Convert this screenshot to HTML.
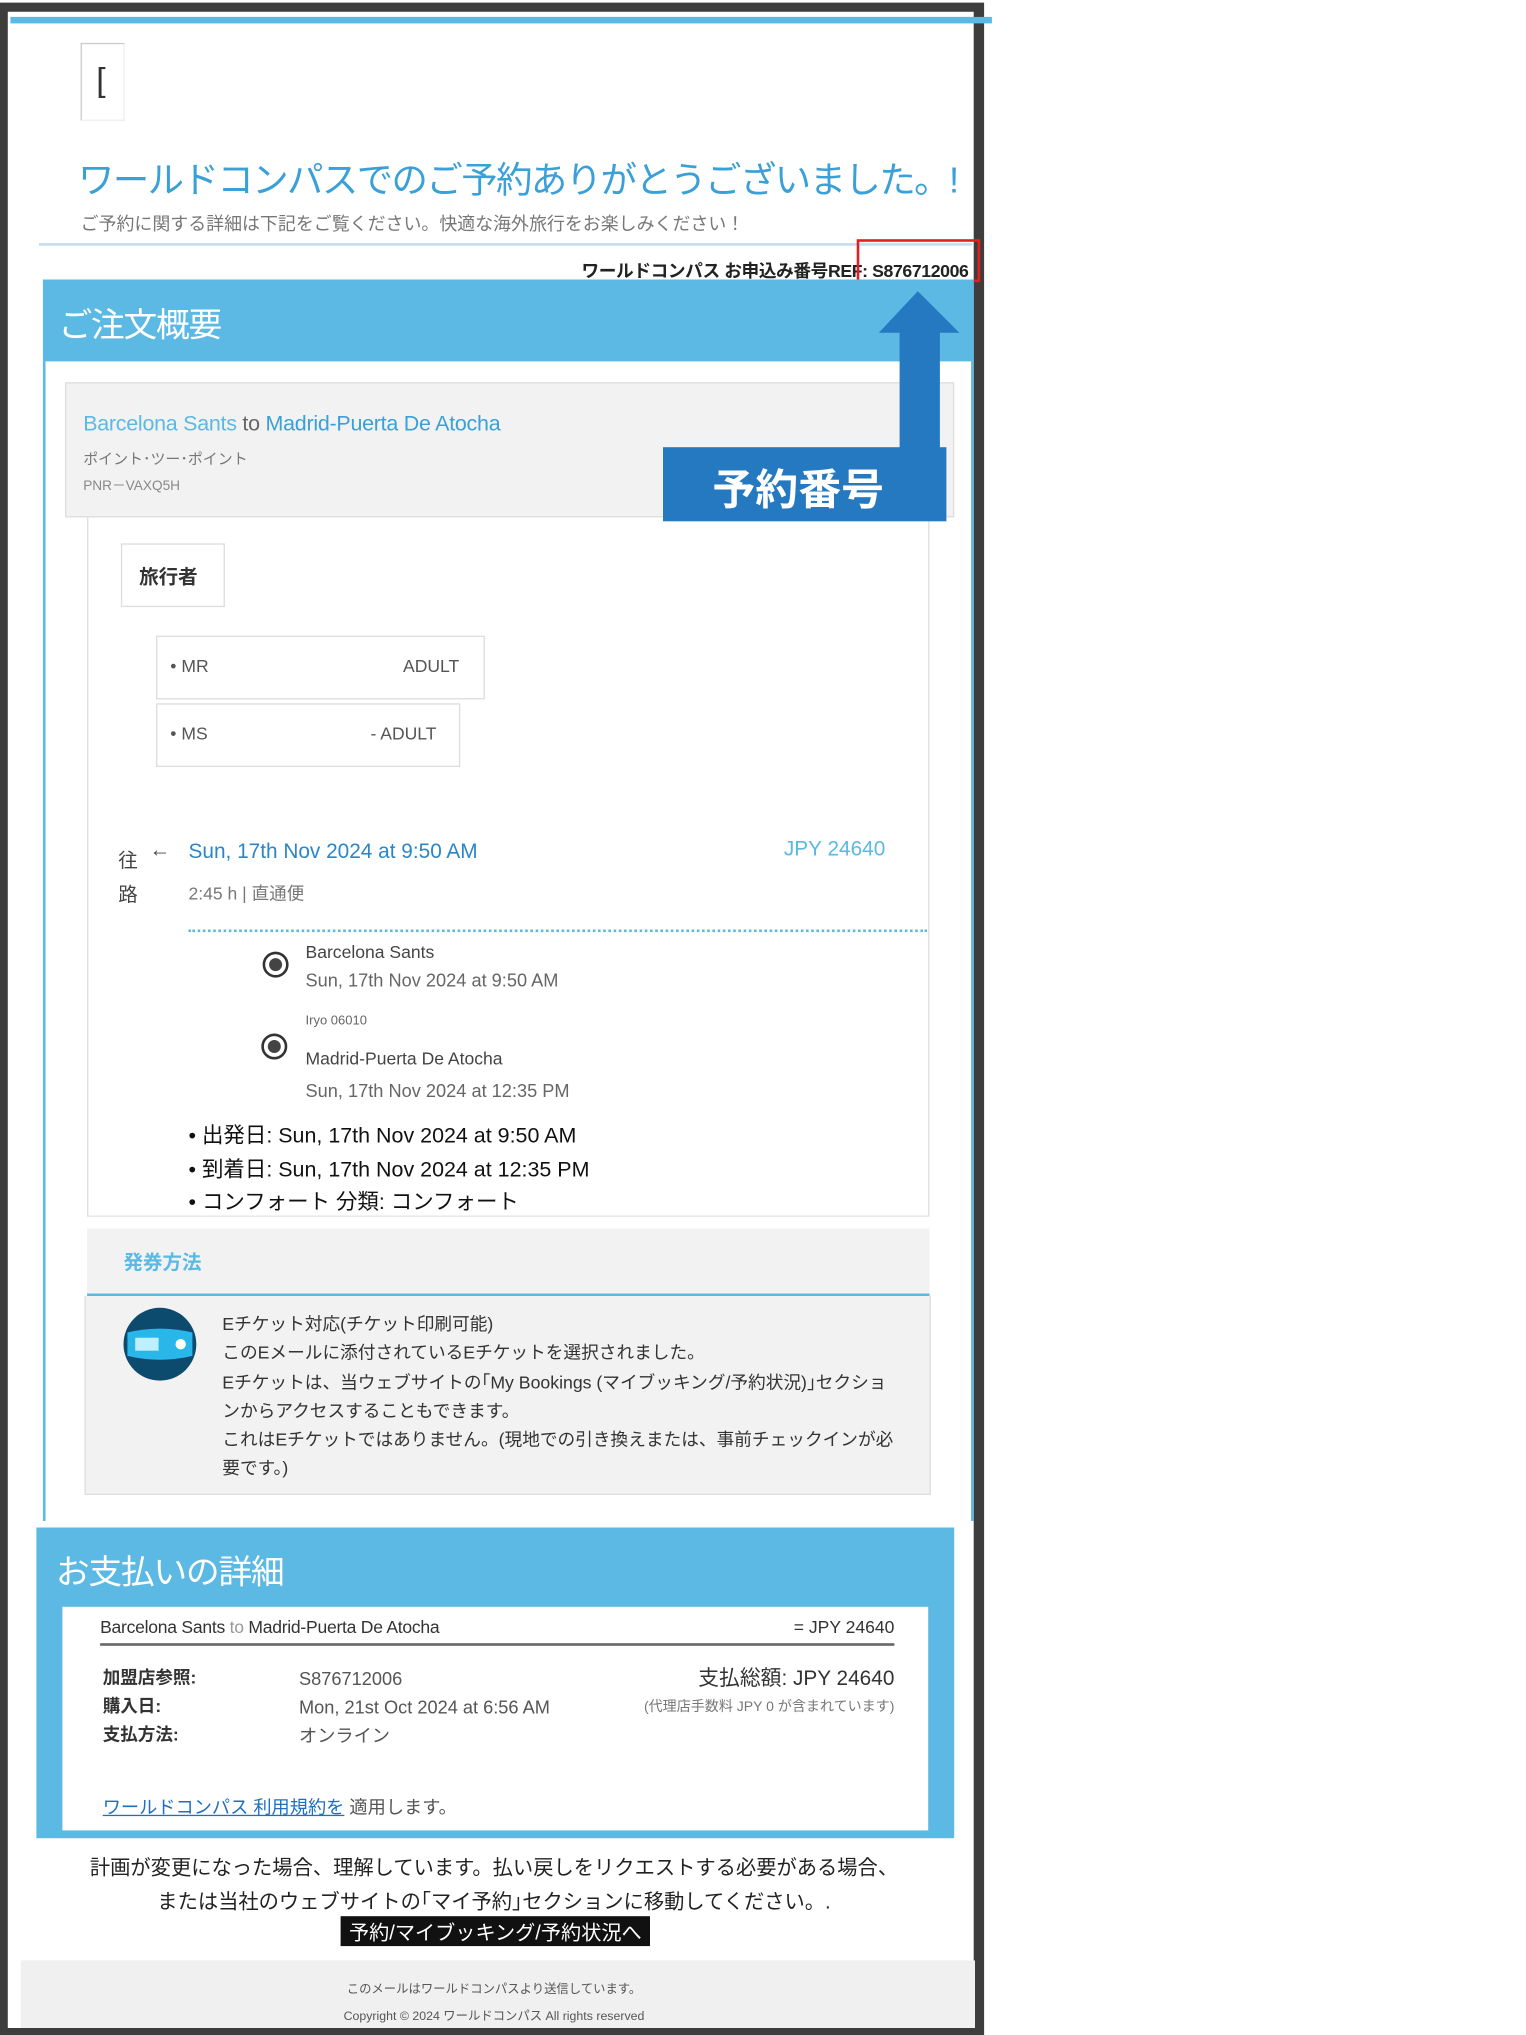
<!DOCTYPE html>
<html><head><meta charset="utf-8"><style>
html,body{margin:0;padding:0;background:#fff;overflow:hidden}
body{width:1526px;height:2035px;position:relative}
#c{position:absolute;left:0;top:0;width:1174px;height:1566px;transform:scale(1.3,1.3);transform-origin:0 0;font-family:"Liberation Sans","Noto Sans CJK JP",sans-serif;color:#222}
.a{position:absolute;white-space:nowrap}
.bx{position:absolute;box-sizing:border-box}
</style></head><body><div id="c">
<!-- frame -->
<div class="bx" style="left:0;top:2px;width:757px;height:1564px;border:6px solid #3d3d3d;border-right-width:8px;border-top-width:7px"></div>
<div class="bx" style="left:8px;top:13px;width:755px;height:5px;background:#5bb9e3"></div>
<!-- logo -->
<div class="bx" style="left:62px;top:33px;width:34px;height:60px;border:1px solid #ccc;border-right-color:#eee;border-bottom-color:#eee"></div>
<div class="a" style="left:74px;top:46px;font-size:26px;color:#333">[</div>
<div class="a" style="left:60px;top:117px;font-size:28px;color:#3aa0d8;letter-spacing:-1.2px">ワールドコンパスでのご予約ありがとうございました。!</div>
<div class="a" style="left:62px;top:161px;font-size:13.8px;color:#777">ご予約に関する詳細は下記をご覧ください。快適な海外旅行をお楽しみください！</div>
<div class="bx" style="left:30px;top:187px;width:718px;height:2px;background:#c5dcf2"></div>
<div class="a" style="left:403px;top:197px;width:342px;text-align:right;font-size:13.6px;font-weight:bold;color:#222;letter-spacing:-0.3px">ワールドコンパス お申込み番号REF: S876712006</div>
<div class="bx" style="left:659px;top:184px;width:95px;height:33px;border:2px solid #e41e1e"></div>
<!-- order summary -->
<div class="bx" style="left:33px;top:215px;width:716px;height:63px;background:#5bb9e3"></div>
<div class="a" style="left:45px;top:230px;font-size:26px;color:#fff;letter-spacing:-1px">ご注文概要</div>
<div class="bx" style="left:33px;top:278px;width:716px;height:892px;border-left:2px solid #5bb9e3;border-right:2px solid #5bb9e3"></div>
<div class="bx" style="left:50px;top:294px;width:684px;height:104px;background:#f2f2f2;border:1px solid #ddd"></div>
<div class="a" style="left:64px;top:317px;font-size:16.5px;color:#5bb9e3;letter-spacing:-0.2px">Barcelona Sants <span style="color:#666">to</span> <span style="color:#3aa0d8">Madrid-Puerta De Atocha</span></div>
<div class="a" style="left:64px;top:345px;font-size:11.5px;color:#777">ポイント･ツー･ポイント</div>
<div class="a" style="left:64px;top:366px;font-size:10.5px;color:#888">PNR－VAXQ5H</div>
<div class="bx" style="left:67px;top:398px;width:648px;height:538px;border-left:1px solid #ddd;border-right:1px solid #ddd;border-bottom:1px solid #e5e5e5"></div>
<div class="bx" style="left:93px;top:418px;width:80px;height:49px;border:1px solid #ddd"></div>
<div class="a" style="left:107px;top:433px;font-size:15px;font-weight:bold;color:#333">旅行者</div>
<div class="bx" style="left:120px;top:489px;width:253px;height:49px;border:1px solid #ddd"></div>
<div class="a" style="left:131px;top:505px;font-size:13.5px;color:#555">• MR</div>
<div class="a" style="left:310px;top:505px;font-size:13.5px;color:#555">ADULT</div>
<div class="bx" style="left:120px;top:541px;width:234px;height:49px;border:1px solid #ddd"></div>
<div class="a" style="left:131px;top:557px;font-size:13.5px;color:#555">• MS</div>
<div class="a" style="left:285px;top:557px;font-size:13.5px;color:#555">- ADULT</div>
<div class="a" style="left:91px;top:650px;font-size:15px;color:#444;line-height:26px;white-space:normal;width:18px">往路</div>
<div class="a" style="left:115px;top:646px;font-size:16px;color:#444">←</div>
<div class="a" style="left:145px;top:647px;font-size:16px;color:#2a86c8">Sun, 17th Nov 2024 at 9:50 AM</div>
<div class="a" style="left:603px;top:645px;font-size:16px;color:#5bb9e3">JPY 24640</div>
<div class="a" style="left:145px;top:676px;font-size:13.5px;color:#777">2:45 h | 直通便</div>
<div class="bx" style="left:145px;top:715px;width:568px;height:0;border-top:2px dotted #5bb9e3"></div>
<svg class="a" style="left:200px;top:730px" width="24" height="88" viewBox="0 0 24 88"><circle cx="12" cy="12" r="9" fill="none" stroke="#333" stroke-width="2"/><circle cx="12" cy="12" r="5" fill="#444"/><circle cx="11" cy="75" r="9" fill="none" stroke="#333" stroke-width="2"/><circle cx="11" cy="75" r="5" fill="#444"/></svg>
<div class="a" style="left:235px;top:725px;font-size:13.5px;color:#444">Barcelona Sants</div>
<div class="a" style="left:235px;top:746px;font-size:14px;color:#666">Sun, 17th Nov 2024 at 9:50 AM</div>
<div class="a" style="left:235px;top:780px;font-size:10px;color:#666">Iryo 06010</div>
<div class="a" style="left:235px;top:807px;font-size:13.5px;color:#444">Madrid-Puerta De Atocha</div>
<div class="a" style="left:235px;top:831px;font-size:14px;color:#666">Sun, 17th Nov 2024 at 12:35 PM</div>
<div class="a" style="left:145px;top:862px;font-size:16.5px;color:#111;line-height:25.5px">• 出発日: Sun, 17th Nov 2024 at 9:50 AM<br>• 到着日: Sun, 17th Nov 2024 at 12:35 PM<br>• コンフォート 分類: コンフォート</div>
<!-- ticketing -->
<div class="bx" style="left:67px;top:945px;width:648px;height:52px;background:#f2f2f2;border-bottom:2px solid #5bb9e3"></div>
<div class="a" style="left:95px;top:960px;font-size:15px;font-weight:bold;color:#5bb9e3">発券方法</div>
<div class="bx" style="left:65px;top:997px;width:651px;height:153px;background:#f2f2f2;border:1px solid #ddd;border-top:none"></div>
<svg class="a" style="left:94px;top:1005px" width="58" height="58" viewBox="0 0 58 58"><circle cx="29" cy="29" r="28" fill="#0c4a6e"/><path d="M4 20 Q29 14 54 20 L54 38 Q29 44 4 38Z" fill="#29b6e8"/><rect x="10" y="24" width="18" height="10" fill="#bff0ff"/><circle cx="45" cy="29" r="4" fill="#fff"/></svg>
<div class="a" style="left:171px;top:1008px;font-size:13.6px;color:#333;line-height:22.3px">Eチケット対応(チケット印刷可能)<br>このEメールに添付されているEチケットを選択されました。<br>Eチケットは、当ウェブサイトの｢My Bookings (マイブッキング/予約状況)｣セクショ<br>ンからアクセスすることもできます。<br>これはEチケットではありません。(現地での引き換えまたは、事前チェックインが必<br>要です。)</div>
<!-- annotation -->
<svg class="a" style="left:670px;top:222px" width="72" height="125" viewBox="0 0 72 125"><polygon points="36,2 68,34 53,34 53,124 22,124 22,34 6,34" fill="#2479c1"/></svg>
<div class="bx" style="left:510px;top:344px;width:218px;height:57px;background:#2479c1"></div>
<div class="a" style="left:548px;top:350px;font-size:33px;font-weight:bold;color:#fff">予約番号</div>
<!-- payment -->
<div class="bx" style="left:28px;top:1175px;width:706px;height:239px;background:#5bb9e3"></div>
<div class="a" style="left:43px;top:1189px;font-size:26px;color:#fff;letter-spacing:-1px">お支払いの詳細</div>
<div class="bx" style="left:48px;top:1236px;width:666px;height:172px;background:#fff"></div>
<div class="a" style="left:77px;top:1244px;font-size:13.5px;color:#333;letter-spacing:-0.2px">Barcelona Sants <span style="color:#999">to</span> Madrid-Puerta De Atocha</div>
<div class="a" style="left:588px;top:1244px;width:100px;text-align:right;font-size:13.5px;color:#333">= JPY 24640</div>
<div class="bx" style="left:77px;top:1264px;width:611px;height:2px;background:#666"></div>
<div class="a" style="left:79px;top:1280px;font-size:13.5px;color:#333;line-height:22px;font-weight:bold">加盟店参照:<br>購入日:<br>支払方法:</div>
<div class="a" style="left:230px;top:1280px;font-size:14px;color:#555;line-height:22px">S876712006<br>Mon, 21st Oct 2024 at 6:56 AM<br>オンライン</div>
<div class="a" style="left:488px;top:1277px;width:200px;text-align:right;font-size:16px;color:#333">支払総額: JPY 24640</div>
<div class="a" style="left:428px;top:1304px;width:260px;text-align:right;font-size:10.8px;color:#777">(代理店手数料 JPY 0 が含まれています)</div>
<div class="a" style="left:79px;top:1380px;font-size:14px;color:#555"><span style="color:#1e6fc0;text-decoration:underline">ワールドコンパス 利用規約を</span> 適用します。</div>
<div class="a" style="left:0;width:760px;text-align:center;top:1425px;font-size:15.6px;color:#222;line-height:26px">計画が変更になった場合、理解しています。払い戻しをリクエストする必要がある場合、<br>または当社のウェブサイトの｢マイ予約｣セクションに移動してください。.</div>
<div class="bx" style="left:262px;top:1474px;width:238px;height:23px;background:#111"></div>
<div class="a" style="left:262px;top:1475px;width:238px;text-align:center;font-size:15.5px;color:#fff">予約/マイブッキング/予約状況へ</div>
<div class="bx" style="left:16px;top:1508px;width:734px;height:52px;background:#f0f0f0"></div>
<div class="a" style="left:0;width:760px;text-align:center;top:1522px;font-size:9.5px;color:#555">このメールはワールドコンパスより送信しています。</div>
<div class="a" style="left:0;width:760px;text-align:center;top:1543px;font-size:9.5px;color:#555">Copyright © 2024 ワールドコンパス All rights reserved</div>
</div></body></html>
